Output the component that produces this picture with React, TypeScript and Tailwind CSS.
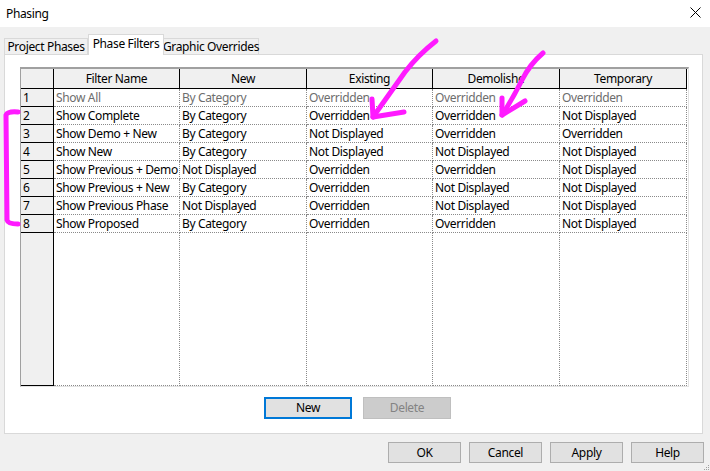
import React from "react";

const cols = ["Filter Name", "New", "Existing", "Demolished", "Temporary"];

const rows: string[][] = [
	["Show All", "By Category", "Overridden", "Overridden", "Overridden"],
	["Show Complete", "By Category", "Overridden", "Overridden", "Not Displayed"],
	["Show Demo + New", "By Category", "Not Displayed", "Overridden", "Overridden"],
	["Show New", "By Category", "Not Displayed", "Not Displayed", "Not Displayed"],
	["Show Previous + Demo", "Not Displayed", "Overridden", "Overridden", "Not Displayed"],
	["Show Previous + New", "By Category", "Overridden", "Not Displayed", "Not Displayed"],
	["Show Previous Phase", "Not Displayed", "Overridden", "Not Displayed", "Not Displayed"],
	["Show Proposed", "By Category", "Overridden", "Overridden", "Not Displayed"],
];

function Grid() {
	return (
		<div className="ml-[15px] mt-[12px] w-[669px] h-[320px] border-t-2 border-l border-[#a0a0a0] border-r border-b border-r-[#e3e3e3] border-b-[#e3e3e3] bg-white">
			<div className="grid h-[317px] grid-cols-[33px_126px_127px_126px_127px_127px] grid-rows-[20px_repeat(8,18px)_1fr]">
				<div className="bg-[#f0f0f0] border-r border-b border-black" />
				{cols.map((c) => (
					<div
						key={c}
						className="bg-[#f0f0f0] border-r border-b border-black flex items-center justify-center overflow-hidden whitespace-nowrap"
					>
						{c === "Demolished" ? "Demolishe" : c}
					</div>
				))}
				{rows.map((r, i) => (
					<React.Fragment key={i}>
						<div className="bg-[#f0f0f0] border-r border-b border-black pl-[2px] leading-[17px]">
							{i + 1}
						</div>
						{r.map((v, j) => (
							<div
								key={j}
								className={`border-r border-b border-dotted border-[#8a8a8a] pl-[2px] leading-[17px] whitespace-nowrap overflow-hidden ${
									i === 0 ? "text-[#6d6d6d]" : "text-black"
								}`}
							>
								{v}
							</div>
						))}
					</React.Fragment>
				))}
				<div className="bg-[#f0f0f0] border-r border-b border-black" />
				{cols.map((c) => (
					<div
						key={c + "-empty"}
						className="border-r border-b border-dotted border-[#8a8a8a]"
					/>
				))}
			</div>
		</div>
	);
}

function Annotations() {
	return (
		<svg
			className="absolute inset-0 pointer-events-none"
			width="710"
			height="471"
			viewBox="0 0 710 471"
		>
			<g
				fill="none"
				stroke="#ff1aff"
				strokeWidth="5"
				strokeLinecap="round"
				strokeLinejoin="round"
			>
				<path d="M436 41 Q418 55 405 72 Q388 96 373 117" />
				<path d="M372 99 L373 117 L404 112" />
				<path d="M543 53 Q530 64 522 80 Q512 100 502 115" />
				<path d="M502 98 L502 115 L525 101" />
				<path d="M18 112 Q8 111 6 115 L7 220 Q8 224 18 224" />
			</g>
		</svg>
	);
}

function Btn({
	children,
	className,
}: {
	children: React.ReactNode;
	className?: string;
}) {
	return (
		<div
			className={`flex items-center justify-center border ${className ?? ""}`}
		>
			{children}
		</div>
	);
}

export default function App() {
	return (
		<div
			className="relative w-[710px] h-[471px] overflow-hidden bg-[#f0f0f0] text-[12px] tracking-[-0.35px] text-black"
			style={{ fontFamily: '"Segoe UI", "Noto Sans", sans-serif' }}
		>
			{/* title bar */}
			<div className="h-[27px] bg-white flex items-center justify-between pl-[6px] pr-[9px]">
				<span className="text-[12px]">Phasing</span>
				<svg width="11" height="11" viewBox="0 0 11 11" className="mb-[3px]">
					<path d="M0.5 0.5 L10.5 10.5 M10.5 0.5 L0.5 10.5" stroke="#000" strokeWidth="1" />
				</svg>
			</div>

			{/* tabs */}
			<div className="flex items-end h-[27px] pl-[4px] whitespace-nowrap">
				<div className="h-[16px] w-[84px] border border-b-0 border-[#d9d9d9] flex items-center justify-center leading-none">
					Project Phases
				</div>
				<div className="relative z-10 h-[21px] w-[76px] -mb-px bg-white border border-b-0 border-[#d9d9d9] flex items-center justify-center leading-none pb-[2px]">
					Phase Filters
				</div>
				<div className="h-[16px] w-[95px] border border-b-0 border-l-0 border-[#d9d9d9] flex items-center justify-center leading-none">
					Graphic Overrides
				</div>
			</div>

			{/* tab panel */}
			<div className="ml-[4px] w-[699px] h-[380px] bg-white border border-[#d9d9d9]">
				<Grid />
				<div className="flex gap-[11px] mt-[10px] pl-[259px]">
					<Btn className="w-[88px] h-[22px] bg-[#e1e1e1] border-2 border-[#0078d7]">
						New
					</Btn>
					<Btn className="w-[88px] h-[22px] bg-[#cccccc] border-[#bfbfbf] text-[#838383]">
						Delete
					</Btn>
				</div>
			</div>

			{/* footer buttons */}
			<div className="flex justify-end gap-[8px] mt-[8px] pr-[6px]">
				{["OK", "Cancel", "Apply", "Help"].map((b) => (
					<Btn key={b} className="w-[73px] h-[21px] bg-[#e1e1e1] border-[#adadad]">
						{b}
					</Btn>
				))}
			</div>

			{/* size grip */}
			<svg className="absolute right-0 bottom-0" width="7" height="7" viewBox="0 0 7 7">
				<g fill="#a0a0a0">
					<rect x="5" y="1" width="1" height="1" />
					<rect x="3" y="3" width="1" height="1" />
					<rect x="5" y="3" width="1" height="1" />
					<rect x="1" y="5" width="1" height="1" />
					<rect x="3" y="5" width="1" height="1" />
					<rect x="5" y="5" width="1" height="1" />
				</g>
			</svg>

			<Annotations />
		</div>
	);
}
